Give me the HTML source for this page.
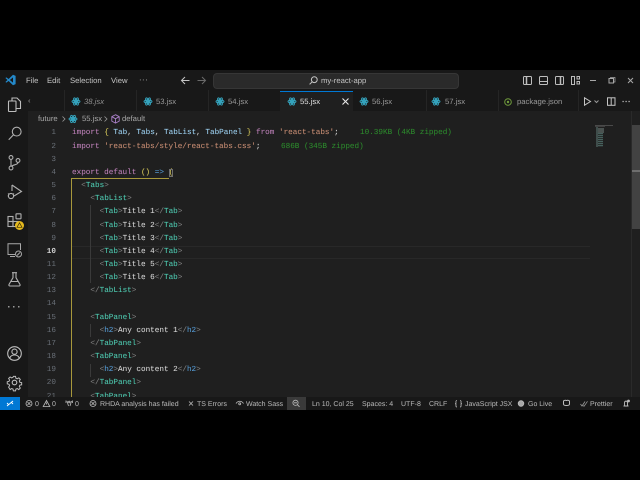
<!DOCTYPE html>
<html>
<head>
<meta charset="utf-8">
<style>
html,body{margin:0;padding:0;background:#000;width:640px;height:480px;overflow:hidden}
body{position:relative;font-family:"Liberation Sans",sans-serif;text-rendering:geometricPrecision}
.a{position:absolute}
.t{position:absolute;white-space:nowrap;color:#c4c4c4;font-size:7.7px;line-height:12px}
.st{font-size:7px;top:398.5px;color:#bcbcbc}
svg{position:absolute;overflow:visible;fill:none}
#code{position:absolute;left:0;top:127.4px;width:632px;height:269.6px;overflow:hidden;font-family:"Liberation Mono",monospace;font-size:7.67px;color:#d4d4d4;-webkit-text-stroke:.06px}
.l{position:absolute;left:0;height:13.16px;line-height:13.16px;white-space:pre;width:632px}
.n{position:absolute;left:36px;width:20px;text-align:right;color:#6a7078;-webkit-text-stroke:0}
.c{position:absolute;left:72px}
.k{color:#bd80b8}.s{color:#c98e74}.g{color:#808080}.v{color:#4ec9b0}.b{color:#569cd6}.w{color:#9cd0f0}.y{color:#d7c95a}.z{color:#2d8a2d;position:absolute}.e{color:#d6d6d6}
</style>
</head>
<body>
<!-- main window -->
<div class="a" style="left:0;top:70px;width:640px;height:340px;background:#1f1f1f"></div>
<div class="a" style="left:0;top:70px;width:640px;height:20px;background:#181818"></div>
<div class="a" style="left:0;top:90px;width:28px;height:307px;background:#181818"></div>
<div class="a" style="left:28px;top:90px;width:612px;height:21px;background:#181818"></div>
<div class="a" style="left:0;top:397px;width:640px;height:13px;background:#181818"></div>

<!-- title bar -->
<svg style="left:5px;top:74px" width="11" height="12" viewBox="0 0 11 12"><path d="M8 .8 3.6 5 1.4 3.4.4 4 2.5 6 .4 8l1 .6L3.6 7 8 11.2l2.6-1.1V1.9z" fill="#2489ca"/><path d="M8 3.4 4.8 6 8 8.6z" fill="#181818"/></svg>
<div class="t" style="left:26px;top:75px">File</div>
<div class="t" style="left:47px;top:75px">Edit</div>
<div class="t" style="left:70px;top:75px">Selection</div>
<div class="t" style="left:111px;top:75px">View</div>
<div class="t" style="left:139px;top:74px;letter-spacing:.5px">···</div>
<svg style="left:181px;top:76px" width="9" height="9" stroke="#c4c4c4"><path d="M.5 4.5h8M4 1 .5 4.5 4 8"/></svg>
<svg style="left:197px;top:76px" width="9" height="9" stroke="#6a6a6a"><path d="M.5 4.5h8M5 1l3.500 3.500L5 8"/></svg>
<div class="a" style="left:213px;top:73px;width:244px;height:14px;background:#2a2a2a;border:1px solid #363636;border-radius:4px"></div>
<svg style="left:309px;top:76px" width="9" height="9" stroke="#c4c4c4"><circle cx="5.300" cy="3.700" r="2.900"/><path d="M3.200 5.800.6 8.400"/></svg>
<div class="t" style="left:321px;top:75px">my-react-app</div>
<svg style="left:523px;top:76px" width="60" height="9" stroke="#bdbdbd">
<rect x=".5" y=".5" width="8" height="8" rx="1"/><path d="M3.500 .5v8" stroke-width="1.500"/>
<rect x="16.500" y=".5" width="8" height="8" rx="1"/><path d="M16.500 5.500h8" stroke-width="1"/>
<rect x="32.500" y=".5" width="8" height="8" rx="1"/><path d="M37.500 .5v8" stroke-width="1.500"/>
<rect x="48.500" y=".5" width="3" height="8"/><rect x="54" y=".5" width="2.500" height="2.500"/><rect x="54" y="5.500" width="2.500" height="2.500"/>
</svg>
<svg style="left:590px;top:76px" width="46" height="9" stroke="#a8a8a8"><path d="M0 4.500h6"/><rect x="19" y="2.500" width="4.500" height="4.500"/><path d="M20.500 2.500V1.500h4.500V6h-1.500" stroke-width=".7"/><path d="M38 2l5 5M43 2l-5 5"/></svg>

<!-- activity bar -->
<svg style="left:7px;top:97px" width="15" height="16" stroke="#bdbdbd" stroke-width="1.100"><path d="M5 4V1h5l3.500 3.500V11.500H9"/><rect x="1.500" y="4" width="7.500" height="10.500" rx=".5"/></svg>
<svg style="left:8px;top:126px" width="14" height="15" stroke="#b0b0b0" stroke-width="1.100"><circle cx="8.700" cy="5.600" r="4.400"/><path d="M5.500 8.800.7 13.800"/></svg>
<svg style="left:8px;top:155px" width="13" height="16" stroke="#b0b0b0" stroke-width="1.100"><circle cx="3" cy="2.500" r="1.900"/><circle cx="3" cy="13" r="1.900"/><circle cx="10" cy="5.500" r="1.900"/><path d="M3 4.500V11M10 7.500c0 2.500-5 2-6.300 3.800"/></svg>
<svg style="left:7px;top:184px" width="15" height="16" stroke="#b0b0b0" stroke-width="1.100"><path d="M5 1v6M5 1l9.500 6.500L7 12"/><circle cx="4" cy="12" r="2.600"/><path d="M1 9.500l1.300 1M7 9.500l-1.300 1M.8 12h1M6.200 12h1"/></svg>
<svg style="left:7px;top:213px" width="18" height="19" stroke="#b0b0b0" stroke-width="1.100"><rect x="1" y="3.500" width="5" height="5"/><rect x="1" y="8.500" width="5" height="5"/><rect x="6" y="8.500" width="5" height="5"/><rect x="9" y=".8" width="5" height="5" rx=".5"/><circle cx="12.500" cy="12.500" r="4.500" fill="#e4b91f" stroke="none"/><path d="M12.500 9.800l2.500 4.500h-5z" stroke="#3a2e05" stroke-width=".7"/></svg>
<svg style="left:7px;top:243px" width="16" height="15" stroke="#a8a8a8" stroke-width="1"><path d="M8 11.500H1V.8h12.500V7"/><path d="M3 13.500h5"/><circle cx="11.500" cy="11" r="3"/><path d="M10 12.500l3-3"/></svg>
<svg style="left:8px;top:272px" width="13" height="15" stroke="#b0b0b0" stroke-width="1.100"><path d="M4 .7h5M5 .7v5L1 12.500c-.4 1 .2 1.500 1 1.500h9c.8 0 1.400-.6 1-1.500L8 5.700v-5M3 9.500h7"/></svg>
<svg style="left:8px;top:306px" width="13" height="2"><rect x="0" y="0" width="1.500" height="1.500" fill="#9a9a9a"/><rect x="5" y="0" width="1.500" height="1.500" fill="#9a9a9a"/><rect x="10" y="0" width="1.500" height="1.500" fill="#9a9a9a"/></svg>
<svg style="left:7px;top:346px" width="15" height="15" stroke="#bdbdbd" stroke-width="1.100"><circle cx="7.500" cy="7.500" r="6.800"/><circle cx="7.500" cy="5.700" r="2.600"/><path d="M2.800 12c.8-2.300 2.500-3 4.700-3s3.900.7 4.700 3"/></svg>
<svg style="left:7px;top:375px" width="15" height="15" stroke="#bdbdbd" stroke-width="1.100"><circle cx="7.500" cy="7.500" r="2.300"/><path d="M6.300.8h2.400l.4 2 1.500.7 1.800-1.100 1.600 1.700-1.100 1.700.6 1.500 2 .4v2.400l-2 .4-.6 1.500 1.100 1.700-1.700 1.700-1.700-1.100-1.500.6-.4 2H6.300l-.4-2-1.500-.6-1.700 1.100L1 12.700l1.100-1.700-.6-1.500-2-.4V6.700l2-.4.6-1.500L1 3.100l1.700-1.700 1.700 1.100 1.500-.7z" transform="translate(.7 .7) scale(.9)"/></svg>

<!-- tabs -->
<div class="a" style="left:280px;top:91px;width:73px;height:20px;background:#1f1f1f;border-top:1px solid #0078d4;box-sizing:border-box"></div>
<div class="a" style="left:64px;top:90px;width:1px;height:21px;background:#252525"></div>
<div class="a" style="left:136px;top:90px;width:1px;height:21px;background:#252525"></div>
<div class="a" style="left:208px;top:90px;width:1px;height:21px;background:#252525"></div>
<div class="a" style="left:426px;top:90px;width:1px;height:21px;background:#252525"></div>
<div class="a" style="left:498px;top:90px;width:1px;height:21px;background:#252525"></div>
<div class="a" style="left:578px;top:90px;width:1px;height:21px;background:#252525"></div>
<div class="t" style="left:28px;top:95px;color:#999">‹</div>
<svg style="left:0;top:0" width="640" height="480">
<g stroke="#35a5bf" stroke-width="1">
<g transform="translate(76 101.500)"><ellipse rx="4" ry="1.600"/><ellipse rx="4" ry="1.600" transform="rotate(60)"/><ellipse rx="4" ry="1.600" transform="rotate(120)"/><circle r=".8" fill="#35a5bf"/></g>
<g transform="translate(148 101.500)"><ellipse rx="4" ry="1.600"/><ellipse rx="4" ry="1.600" transform="rotate(60)"/><ellipse rx="4" ry="1.600" transform="rotate(120)"/><circle r=".8" fill="#35a5bf"/></g>
<g transform="translate(220 101.500)"><ellipse rx="4" ry="1.600"/><ellipse rx="4" ry="1.600" transform="rotate(60)"/><ellipse rx="4" ry="1.600" transform="rotate(120)"/><circle r=".8" fill="#35a5bf"/></g>
<g transform="translate(292 101.500)"><ellipse rx="4" ry="1.600"/><ellipse rx="4" ry="1.600" transform="rotate(60)"/><ellipse rx="4" ry="1.600" transform="rotate(120)"/><circle r=".8" fill="#35a5bf"/></g>
<g transform="translate(364 101.500)"><ellipse rx="4" ry="1.600"/><ellipse rx="4" ry="1.600" transform="rotate(60)"/><ellipse rx="4" ry="1.600" transform="rotate(120)"/><circle r=".8" fill="#35a5bf"/></g>
<g transform="translate(436 101.500)"><ellipse rx="4" ry="1.600"/><ellipse rx="4" ry="1.600" transform="rotate(60)"/><ellipse rx="4" ry="1.600" transform="rotate(120)"/><circle r=".8" fill="#35a5bf"/></g>
<g transform="translate(73 119)"><ellipse rx="4" ry="1.600"/><ellipse rx="4" ry="1.600" transform="rotate(60)"/><ellipse rx="4" ry="1.600" transform="rotate(120)"/><circle r=".8" fill="#35a5bf"/></g>
</g>
<circle cx="508" cy="102" r="3.300" stroke="#6f9a3c" stroke-width="1"/><circle cx="508" cy="102" r="1.200" fill="#6f9a3c"/>
</svg>
<div class="t" style="left:84px;top:96px;color:#8f8f8f;font-style:italic">38.jsx</div>
<div class="t" style="left:156px;top:96px;color:#9a9a9a">53.jsx</div>
<div class="t" style="left:228px;top:96px;color:#9a9a9a">54.jsx</div>
<div class="t" style="left:300px;top:96px;color:#e0e0e0">55.jsx</div>
<svg style="left:342px;top:98px" width="7" height="7" stroke="#e8e8e8" stroke-width="1.100"><path d="M.5.5l6 6M6.500.5l-6 6"/></svg>
<div class="t" style="left:372px;top:96px;color:#9a9a9a">56.jsx</div>
<div class="t" style="left:445px;top:96px;color:#9a9a9a">57.jsx</div>
<div class="t" style="left:517px;top:96px;color:#9a9a9a">package.json</div>
<svg style="left:584px;top:97px" width="50" height="9" stroke="#c4c4c4"><path d="M.5.8v7.400L6.500 4.500z"/><path d="M10.500 3.500l2 2 2-2" stroke="#999"/><rect x="23.500" y=".8" width="7.500" height="7.500"/><path d="M27.200 .8v7.500"/><path d="M38.500 4.500h1.200M41.500 4.500h1.200M44.500 4.500h1.200" stroke-width="1.200"/></svg>

<!-- breadcrumb -->
<div class="t" style="left:38px;top:113px;color:#a8a8a8">future</div>
<svg style="left:62px;top:116px" width="4" height="6" stroke="#999" stroke-width=".8"><path d="M.5.500l2.500 2.500L.5 5.500"/></svg>
<div class="t" style="left:82px;top:113px;color:#a8a8a8">55.jsx</div>
<svg style="left:104px;top:116px" width="4" height="6" stroke="#999" stroke-width=".8"><path d="M.5.500l2.500 2.500L.5 5.500"/></svg>
<svg style="left:111px;top:114px" width="9" height="10" stroke="#a97fc7" stroke-width=".9"><path d="M4.500.7l3.700 2v4.400l-3.700 2-3.700-2V2.700zM.8 2.700l3.700 2 3.700-2M4.500 4.700v4.400"/></svg>
<div class="t" style="left:122px;top:113px;color:#a8a8a8">default</div>

<!-- code -->
<div id="code">
<div class="a" style="left:72px;top:118.400px;width:518px;height:13.160px;border-top:1px solid #282828;border-bottom:1px solid #282828;box-sizing:border-box"></div>
<div class="l" style="top:0"><span class="n">1</span><span class="c"><span class="k">import</span> <span class="y">{</span> <span class="w">Tab</span>, <span class="w">Tabs</span>, <span class="w">TabList</span>, <span class="w">TabPanel</span> <span class="y">}</span> <span class="k">from</span> <span class="s">'react-tabs'</span>;</span><span class="z" style="left:360px">10.39KB (4KB zipped)</span></div>
<div class="l" style="top:13.160px"><span class="n">2</span><span class="c"><span class="k">import</span> <span class="s">'react-tabs/style/react-tabs.css'</span>;</span><span class="z" style="left:281px">686B (345B zipped)</span></div>
<div class="l" style="top:26.320px"><span class="n">3</span></div>
<div class="l" style="top:39.480px"><span class="n">4</span><span class="c"><span class="k">export default</span> <span class="y">()</span> <span class="b">=&gt;</span> <span class="y" style="outline:1px solid #6e6e6e;outline-offset:-1px">(</span></span></div>
<div class="l" style="top:52.640px"><span class="n">5</span><span class="c">  <span class="g">&lt;</span><span class="v">Tabs</span><span class="g">&gt;</span></span></div>
<div class="l" style="top:65.800px"><span class="n">6</span><span class="c">    <span class="g">&lt;</span><span class="v">TabList</span><span class="g">&gt;</span></span></div>
<div class="l" style="top:78.960px"><span class="n">7</span><span class="c">      <span class="g">&lt;</span><span class="v">Tab</span><span class="g">&gt;</span><span class="e">Title 1</span><span class="g">&lt;/</span><span class="v">Tab</span><span class="g">&gt;</span></span></div>
<div class="l" style="top:92.120px"><span class="n">8</span><span class="c">      <span class="g">&lt;</span><span class="v">Tab</span><span class="g">&gt;</span><span class="e">Title 2</span><span class="g">&lt;/</span><span class="v">Tab</span><span class="g">&gt;</span></span></div>
<div class="l" style="top:105.280px"><span class="n">9</span><span class="c">      <span class="g">&lt;</span><span class="v">Tab</span><span class="g">&gt;</span><span class="e">Title 3</span><span class="g">&lt;/</span><span class="v">Tab</span><span class="g">&gt;</span></span></div>
<div class="l" style="top:118.440px"><span class="n" style="color:#d4d4d4;font-weight:bold">10</span><span class="c">      <span class="g">&lt;</span><span class="v">Tab</span><span class="g">&gt;</span><span class="e">Title 4</span><span class="g">&lt;/</span><span class="v">Tab</span><span class="g">&gt;</span></span></div>
<div class="l" style="top:131.600px"><span class="n">11</span><span class="c">      <span class="g">&lt;</span><span class="v">Tab</span><span class="g">&gt;</span><span class="e">Title 5</span><span class="g">&lt;/</span><span class="v">Tab</span><span class="g">&gt;</span></span></div>
<div class="l" style="top:144.760px"><span class="n">12</span><span class="c">      <span class="g">&lt;</span><span class="v">Tab</span><span class="g">&gt;</span><span class="e">Title 6</span><span class="g">&lt;/</span><span class="v">Tab</span><span class="g">&gt;</span></span></div>
<div class="l" style="top:157.920px"><span class="n">13</span><span class="c">    <span class="g">&lt;/</span><span class="v">TabList</span><span class="g">&gt;</span></span></div>
<div class="l" style="top:171.080px"><span class="n">14</span></div>
<div class="l" style="top:184.240px"><span class="n">15</span><span class="c">    <span class="g">&lt;</span><span class="v">TabPanel</span><span class="g">&gt;</span></span></div>
<div class="l" style="top:197.400px"><span class="n">16</span><span class="c">      <span class="g">&lt;</span><span class="b">h2</span><span class="g">&gt;</span><span class="e">Any content 1</span><span class="g">&lt;/</span><span class="b">h2</span><span class="g">&gt;</span></span></div>
<div class="l" style="top:210.560px"><span class="n">17</span><span class="c">    <span class="g">&lt;/</span><span class="v">TabPanel</span><span class="g">&gt;</span></span></div>
<div class="l" style="top:223.720px"><span class="n">18</span><span class="c">    <span class="g">&lt;</span><span class="v">TabPanel</span><span class="g">&gt;</span></span></div>
<div class="l" style="top:236.880px"><span class="n">19</span><span class="c">      <span class="g">&lt;</span><span class="b">h2</span><span class="g">&gt;</span><span class="e">Any content 2</span><span class="g">&lt;/</span><span class="b">h2</span><span class="g">&gt;</span></span></div>
<div class="l" style="top:250.040px"><span class="n">20</span><span class="c">    <span class="g">&lt;/</span><span class="v">TabPanel</span><span class="g">&gt;</span></span></div>
<div class="l" style="top:263.200px"><span class="n">21</span><span class="c">    <span class="g">&lt;</span><span class="v">TabPanel</span><span class="g">&gt;</span></span></div>
</div>
<!-- guides -->
<div class="a" style="left:71px;top:178px;width:98px;height:1px;background:#a8983c"></div>
<div class="a" style="left:71px;top:178px;width:1px;height:219px;background:#a8983c"></div>
<div class="a" style="left:90px;top:205px;width:1px;height:78px;background:#3a3a3a"></div>
<div class="a" style="left:90px;top:324px;width:1px;height:13px;background:#3a3a3a"></div>
<div class="a" style="left:90px;top:364px;width:1px;height:13px;background:#3a3a3a"></div>
<!-- minimap -->
<div class="a" style="left:595px;top:125px;width:18px;height:1px;background:#4a4a4a"></div>
<div class="a" style="left:595px;top:126px;width:10px;height:1px;background:#404040"></div>
<div class="a" style="left:596px;top:127px;width:2px;height:20px;background:#3f4d4b"></div>
<div class="a" style="left:598px;top:128px;width:6px;height:5px;background:#4a5250"></div>
<div class="a" style="left:598px;top:133px;width:5px;height:14px;background:repeating-linear-gradient(#45605c 0 1px,#2a2f2e 1px 2px)"></div>
<!-- scrollbar -->
<div class="a" style="left:632px;top:125px;width:8px;height:104px;background:#424242"></div>
<div class="a" style="left:632px;top:170px;width:8px;height:2px;background:#6e6e6e"></div>
<div class="a" style="left:631px;top:111px;width:1px;height:286px;background:#2a2a2a"></div>

<!-- status bar -->
<div class="a" style="left:0;top:397px;width:20px;height:13px;background:#0078d4"></div>
<svg style="left:6px;top:400px" width="8" height="7" stroke="#fff" stroke-width=".9"><path d="M1 6l3-2.500M7 1 4 3.500M1 3l1.500 1.500M5.500 2.500 7 4"/></svg>
<div class="a" style="left:287px;top:397px;width:19px;height:13px;background:#3a3a3a"></div>
<svg style="left:0;top:0" width="640" height="480" stroke="#bdbdbd" stroke-width=".8">
<circle cx="29" cy="403.500" r="3"/><path d="M27.500 402l3 3M30.500 402l-3 3"/>
<path d="M46.500 400.500l3.300 6h-6.600zM46.500 402.500v2"/>
<path d="M67 401l1.500 5M71.500 401l-1.500 5M66 400.500v2.500M72.500 400.500v2.500"/><circle cx="69.300" cy="402" r=".8"/>
<circle cx="93" cy="403.500" r="3"/><path d="M91.500 402l3 3M94.500 402l-3 3"/>
<path d="M189 401.500l4 4M193 401.500l-4 4"/>
<path d="M236 403.500c2-3 5.500-3 7.500 0"/><circle cx="239.700" cy="403.800" r="1"/>
<circle cx="295.500" cy="402.800" r="2.600"/><path d="M297.500 404.800l2 2M294 402.800h3"/>
<path d="M457 400.500c-1.500 0-1 1.500-1 2.500s-.5 .7-1 .7c.5 0 1 0 1 .8s-.5 2.500 1 2.500M460 400.500c1.500 0 1 1.500 1 2.500s.5 .7 1 .7c-.5 0-1 0-1 .8s.5 2.500-1 2.500"/>
<circle cx="521" cy="403.500" r="2.800" fill="#a8a8a8"/>
<path d="M563.500 401c1-1 3-1 3 0 0-1 2-1 3 0v3c0 2-6 2-6 0z" stroke-width="1"/>
<path d="M580.500 404l1.500 2 3-4.500M583 405.500l1 .8 3.500-5" stroke="#999"/>
<path d="M623.500 406h5M624.500 406v-3c0-2.500 3-2.500 3 0v3" stroke-width=".9"/><circle cx="628.500" cy="401" r="1" fill="#bdbdbd"/>
</svg>
<div class="t st" style="left:35px">0</div>
<div class="t st" style="left:52px">0</div>
<div class="t st" style="left:75px">0</div>
<div class="t st" style="left:100px">RHDA analysis has failed</div>
<div class="t st" style="left:197px">TS Errors</div>
<div class="t st" style="left:246px">Watch Sass</div>
<div class="t st" style="left:312px">Ln 10, Col 25</div>
<div class="t st" style="left:362px">Spaces: 4</div>
<div class="t st" style="left:401px">UTF-8</div>
<div class="t st" style="left:429px">CRLF</div>
<div class="t st" style="left:465px">JavaScript JSX</div>
<div class="t st" style="left:528px">Go Live</div>
<div class="t st" style="left:590px">Prettier</div>
</body>
</html>
